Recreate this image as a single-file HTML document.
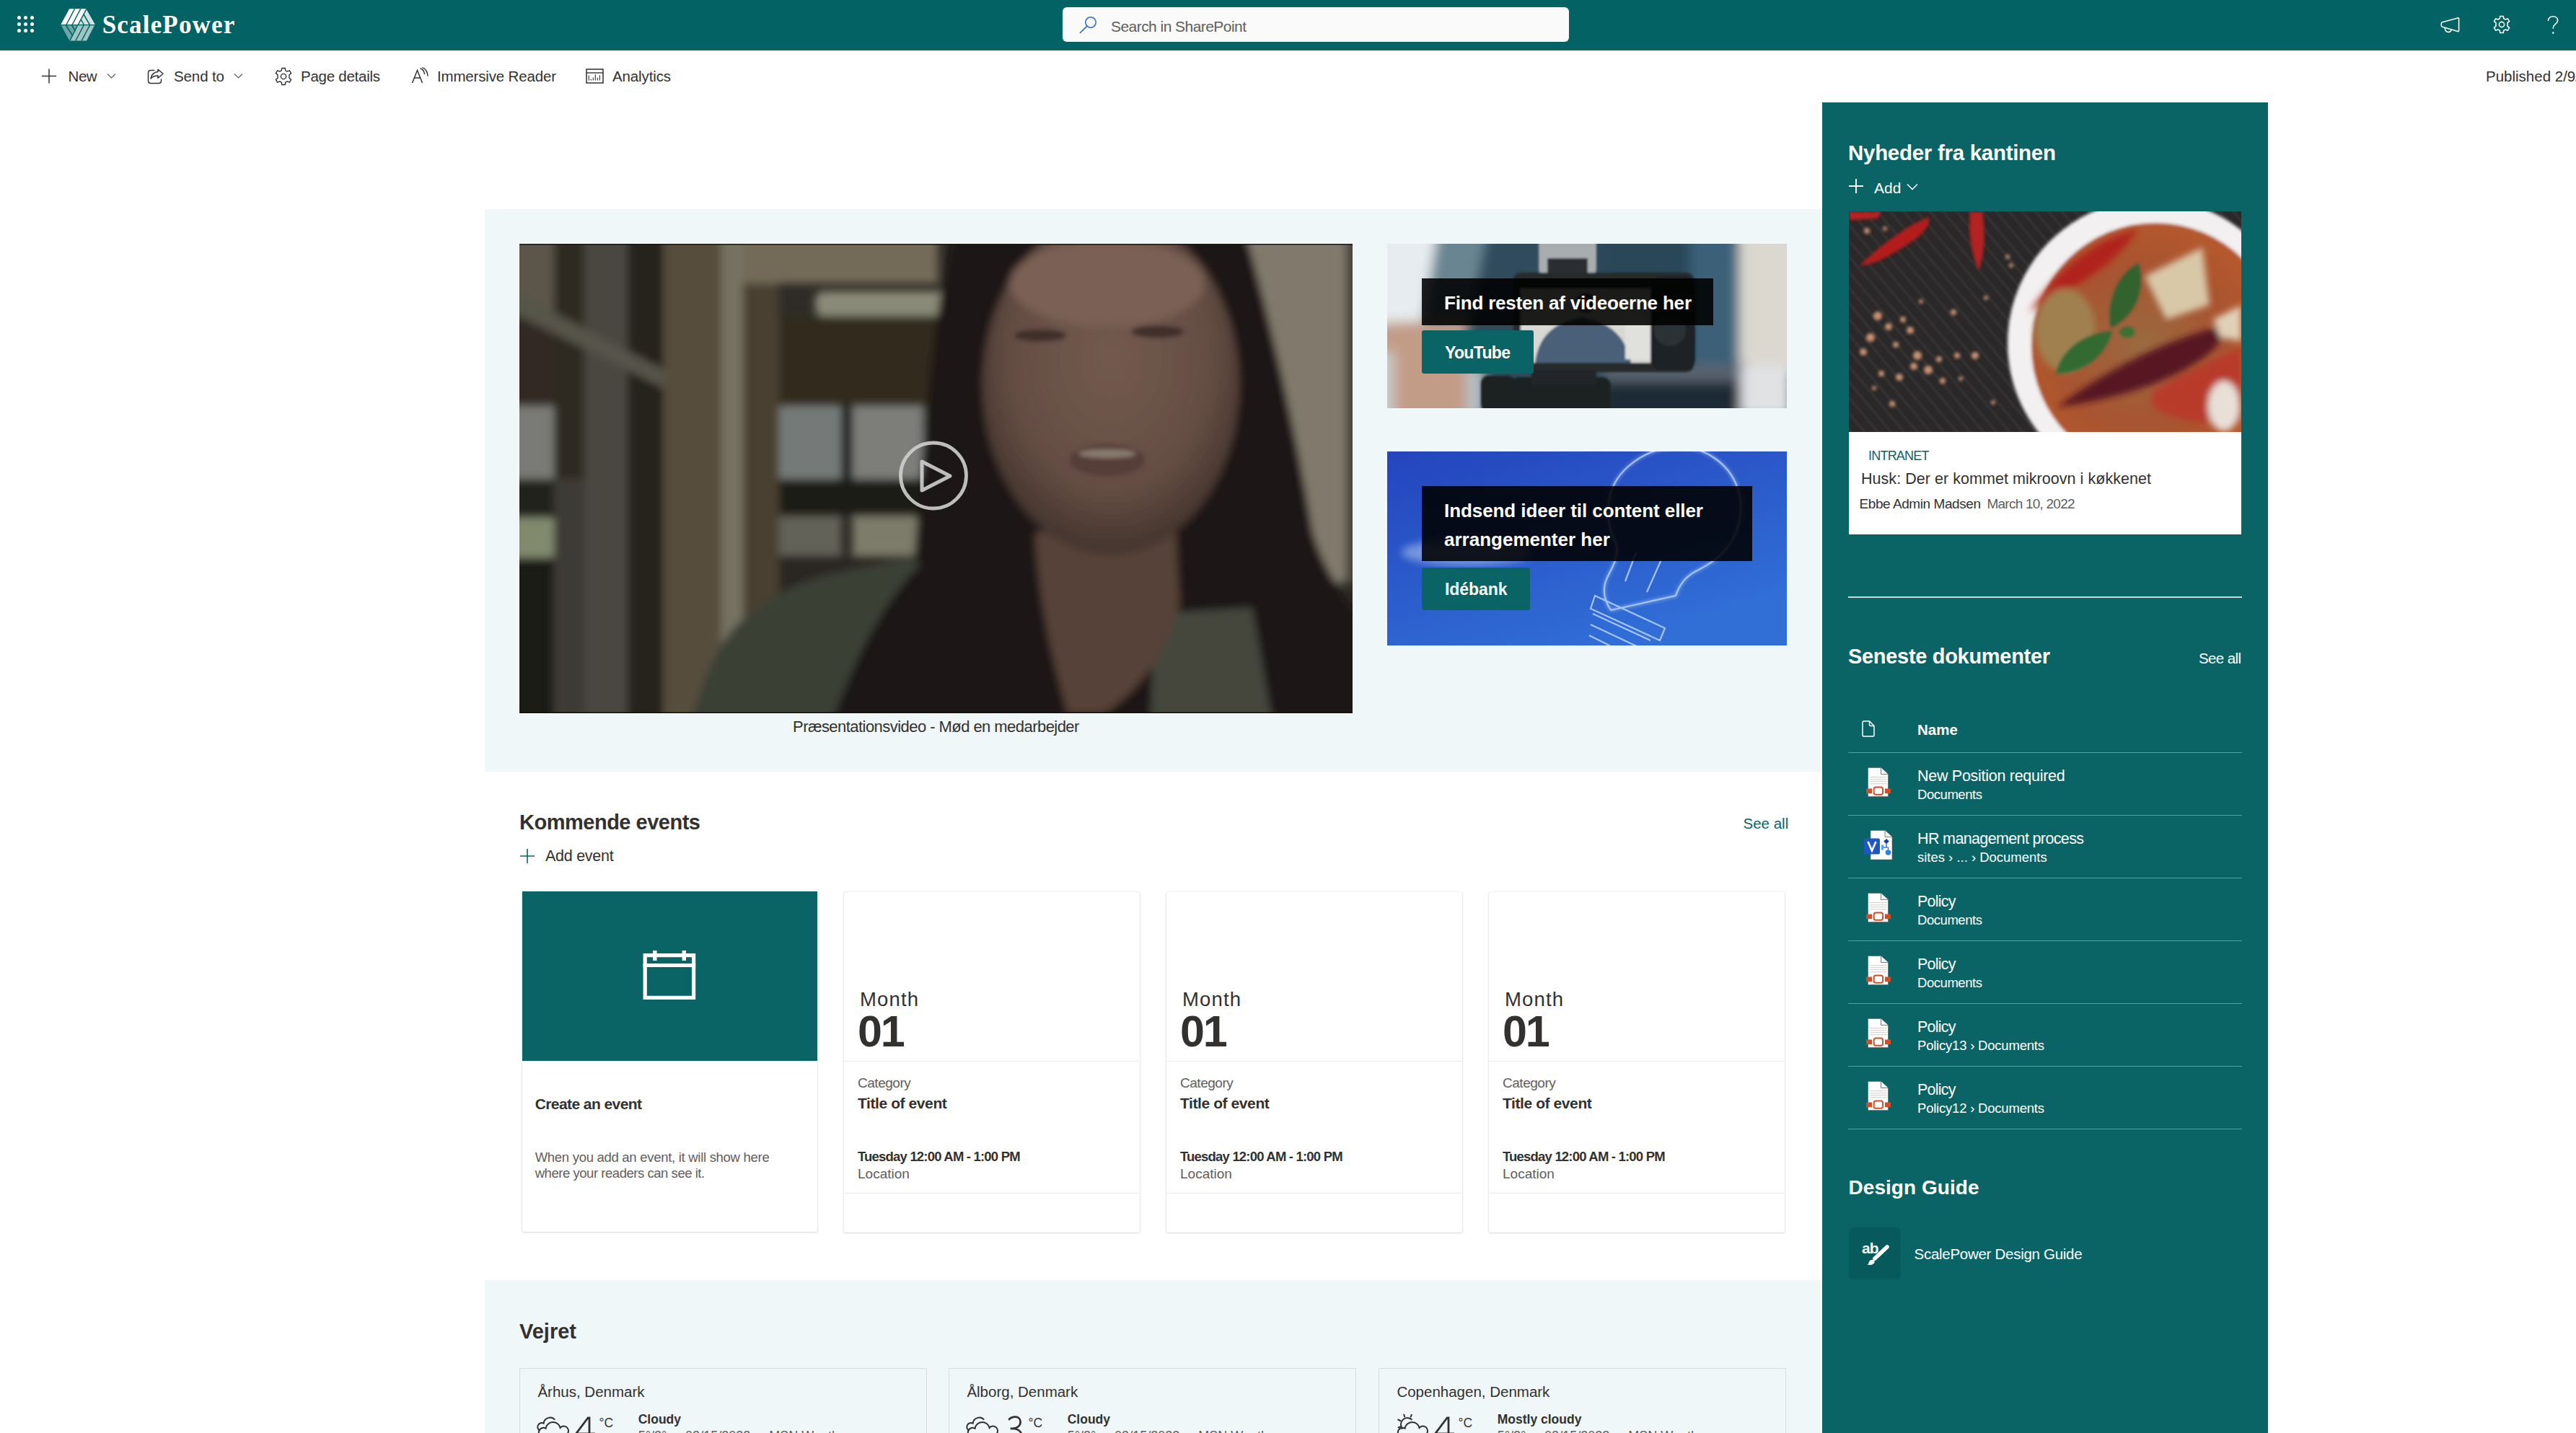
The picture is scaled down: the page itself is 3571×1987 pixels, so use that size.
<!DOCTYPE html>
<html><head><meta charset="utf-8"><style>
html,body{margin:0;padding:0;width:3571px;height:1987px;overflow:hidden;background:#fff;position:relative;font-family:"Liberation Sans", sans-serif;}
.t{position:absolute;line-height:1;white-space:pre;}
.a{position:absolute;}


</style></head><body>
<div class='a' style='left:0;top:0;width:3571px;height:70px;background:#036264'></div><div class='a' style='left:24px;top:22px;width:5px;height:5px;border-radius:50%;background:#fff'></div><div class='a' style='left:33px;top:22px;width:5px;height:5px;border-radius:50%;background:#fff'></div><div class='a' style='left:42px;top:22px;width:5px;height:5px;border-radius:50%;background:#fff'></div><div class='a' style='left:24px;top:31px;width:5px;height:5px;border-radius:50%;background:#fff'></div><div class='a' style='left:33px;top:31px;width:5px;height:5px;border-radius:50%;background:#fff'></div><div class='a' style='left:42px;top:31px;width:5px;height:5px;border-radius:50%;background:#fff'></div><div class='a' style='left:24px;top:40px;width:5px;height:5px;border-radius:50%;background:#fff'></div><div class='a' style='left:33px;top:40px;width:5px;height:5px;border-radius:50%;background:#fff'></div><div class='a' style='left:42px;top:40px;width:5px;height:5px;border-radius:50%;background:#fff'></div><div class='a' style='left:1473px;top:10px;width:702px;height:48px;background:#fafafa;border-radius:6px'></div><div class='a' style='left:2526px;top:142px;width:618px;height:1845px;background:#0a6466'></div><div class='a' style='left:672px;top:290px;width:1853px;height:780px;background:#eff7f9'></div><div class='a' style='left:672px;top:1775px;width:1853px;height:212px;background:#eff7f9'></div><div class='a' style='left:720px;top:1897px;width:565px;height:120px;border:1px solid #dcdcdc;box-sizing:border-box'></div><div class='a' style='left:1315px;top:1897px;width:565px;height:120px;border:1px solid #dcdcdc;box-sizing:border-box'></div><div class='a' style='left:1911px;top:1897px;width:565px;height:120px;border:1px solid #dcdcdc;box-sizing:border-box'></div><div class='a' style='left:724px;top:1236px;width:409px;height:472px;background:#fff;border-radius:2px;box-shadow:0 0 1.5px rgba(0,0,0,.22),0 1px 3px rgba(0,0,0,.12)'></div><div class='a' style='left:724px;top:1236px;width:409px;height:235px;background:#0a6466'></div><div class='a' style='left:1170px;top:1236.5px;width:410px;height:472px;background:#fff;border-radius:2px;box-shadow:0 0 1.5px rgba(0,0,0,.22),0 1px 3px rgba(0,0,0,.12)'></div><div class='a' style='left:1170px;top:1471px;width:410px;height:1px;background:#edebe9'></div><div class='a' style='left:1170px;top:1654px;width:410px;height:1px;background:#edebe9'></div><div class='a' style='left:1617px;top:1236.5px;width:410px;height:472px;background:#fff;border-radius:2px;box-shadow:0 0 1.5px rgba(0,0,0,.22),0 1px 3px rgba(0,0,0,.12)'></div><div class='a' style='left:1617px;top:1471px;width:410px;height:1px;background:#edebe9'></div><div class='a' style='left:1617px;top:1654px;width:410px;height:1px;background:#edebe9'></div><div class='a' style='left:2064px;top:1236.5px;width:410px;height:472px;background:#fff;border-radius:2px;box-shadow:0 0 1.5px rgba(0,0,0,.22),0 1px 3px rgba(0,0,0,.12)'></div><div class='a' style='left:2064px;top:1471px;width:410px;height:1px;background:#edebe9'></div><div class='a' style='left:2064px;top:1654px;width:410px;height:1px;background:#edebe9'></div><div class='a' style='left:2563px;top:599px;width:544px;height:142px;background:#fff'></div><div class='a' style='left:2562px;top:827px;width:546px;height:2px;background:#c8d8d8'></div><div class='a' style='left:2562px;top:1043px;width:546px;height:1px;background:#4aa3a3'></div><div class='a' style='left:2562px;top:1130px;width:546px;height:1px;background:#4aa3a3'></div><div class='a' style='left:2562px;top:1217px;width:546px;height:1px;background:#4aa3a3'></div><div class='a' style='left:2562px;top:1304px;width:546px;height:1px;background:#4aa3a3'></div><div class='a' style='left:2562px;top:1391px;width:546px;height:1px;background:#4aa3a3'></div><div class='a' style='left:2562px;top:1478px;width:546px;height:1px;background:#4aa3a3'></div><div class='a' style='left:2562px;top:1565px;width:546px;height:1px;background:#4aa3a3'></div><div class='a' style='left:719px;top:337px;width:1157px;height:653px;background:#fff'></div><svg class="a" style="left:720px;top:338px" width="1155" height="651" viewBox="0 0 1155 651">
<defs>
<filter id="bv" x="-10%" y="-10%" width="120%" height="120%"><feGaussianBlur stdDeviation="6"/></filter>
<filter id="bv2" x="-10%" y="-10%" width="120%" height="120%"><feGaussianBlur stdDeviation="3"/></filter>
<radialGradient id="face" cx="0.5" cy="0.42" r="0.6">
<stop offset="0" stop-color="#735a4f"/><stop offset="0.65" stop-color="#644d43"/><stop offset="1" stop-color="#3f312b"/>
</radialGradient>
</defs>
<rect width="1155" height="651" fill="#2f2c27"/>
<g filter="url(#bv)">
<rect x="-20" y="-20" width="68" height="120" fill="#5c5548"/>
<rect x="-20" y="100" width="68" height="125" fill="#302c24"/>
<rect x="-20" y="225" width="68" height="101" fill="#7a7a76"/>
<rect x="-20" y="326" width="68" height="54" fill="#22221c"/>
<rect x="-20" y="380" width="68" height="55" fill="#828a6e"/>
<rect x="-20" y="435" width="68" height="240" fill="#1a1a16"/>
<rect x="48" y="-20" width="42" height="346" fill="#2e2a24"/>
<rect x="48" y="326" width="42" height="345" fill="#3c3a34"/>
<rect x="90" y="-20" width="60" height="691" fill="#4a4640"/>
<rect x="150" y="-20" width="50" height="691" fill="#28241e"/>
<path d="M-20 60 L210 180 L210 205 L-20 90Z" fill="#57544a"/>
<rect x="200" y="-20" width="80" height="691" fill="#564d3e"/>
<rect x="280" y="-20" width="30" height="691" fill="#767262"/>
<rect x="310" y="-20" width="270" height="75" fill="#736a58"/>
<rect x="410" y="66" width="180" height="34" rx="12" fill="#8a8a78"/>
<rect x="310" y="55" width="50" height="616" fill="#4a4030"/>
<rect x="360" y="100" width="220" height="125" fill="#30291f"/>
<rect x="360" y="225" width="86" height="101" fill="#747a78"/>
<rect x="446" y="225" width="16" height="101" fill="#1e1e1a"/>
<rect x="462" y="225" width="98" height="101" fill="#7d7e7a"/>
<rect x="360" y="326" width="200" height="52" fill="#1c1d19"/>
<rect x="360" y="378" width="86" height="100" fill="#626258"/>
<rect x="462" y="378" width="92" height="54" fill="#7d7c6a"/>
<rect x="360" y="432" width="200" height="240" fill="#2a2822"/>
<rect x="995" y="-20" width="150" height="490" fill="#817a6c"/>
<rect x="1145" y="-20" width="20" height="490" fill="#4a453c"/>
<!-- hair -->
<path d="M600 -20 L1005 -20 C1040 100 1075 250 1100 400 C1115 450 1140 490 1175 520 L1175 671 L420 671 C450 590 490 520 548 430 C558 300 570 120 600 -20 Z" fill="#1b1816"/>
<!-- shirt -->
<path d="M236 671 C255 590 290 530 317 516 C340 495 380 470 431 458 L544 433 L556 445 C510 490 470 560 430 671 Z" fill="#3b3f36"/>
<path d="M880 513 L1016 505 L1045 671 L875 671 Z" fill="#44473c"/>
<!-- neck / chest -->
<path d="M715 400 L910 400 L915 500 C895 570 860 620 810 651 L760 651 C740 580 720 500 715 400Z" fill="#564238"/>
<!-- face -->
<ellipse cx="820" cy="196" rx="178" ry="235" fill="url(#face)"/>
<ellipse cx="815" cy="55" rx="135" ry="60" fill="#7a6055"/>
</g>
<g filter="url(#bv2)">
<ellipse cx="722" cy="127" rx="36" ry="8" fill="#3f2e29"/>
<ellipse cx="885" cy="122" rx="36" ry="8" fill="#3f2e29"/>
<ellipse cx="815" cy="300" rx="52" ry="22" fill="#553c38"/>
<ellipse cx="815" cy="291" rx="40" ry="6" fill="#8a7c70"/>
</g>
<rect x="0" y="0" width="1155" height="1.5" fill="#1a1612"/><rect x="0" y="649.5" width="1155" height="1.5" fill="#12100c"/>
<!-- play button -->
<circle cx="574" cy="321.5" r="45.5" fill="none" stroke="#cfcfcf" stroke-width="4.8" opacity="0.9"/>
<path d="M558 302 L558 342 L597 322 Z" fill="none" stroke="#cfcfcf" stroke-width="5" stroke-linejoin="round" opacity="0.9"/>
</svg>
<svg class="a" style="left:1923px;top:338px" width="554" height="228" viewBox="0 0 554 228">
<defs>
<filter id="bt1" x="-20%" y="-20%" width="140%" height="140%"><feGaussianBlur stdDeviation="8"/></filter>
<filter id="bt1b" x="-20%" y="-20%" width="140%" height="140%"><feGaussianBlur stdDeviation="1.5"/></filter>
</defs>
<rect width="554" height="228" fill="#2f4b5c"/>
<g filter="url(#bt1)">
<path d="M-20 -20 L80 -20 L50 120 L-20 130Z" fill="#e6ecef"/>
<path d="M70 -20 L140 -20 L115 110 L48 118Z" fill="#6a8592"/>
<path d="M-20 110 L110 105 L125 250 L-20 250Z" fill="#c39c88"/>
<rect x="-20" y="150" width="30" height="100" fill="#c8ccc8"/>
<rect x="110" y="170" width="25" height="70" fill="#b8c0c4"/>
<rect x="290" y="-20" width="140" height="90" rx="30" fill="#2a4658"/>
<rect x="420" y="-20" width="70" height="200" fill="#3a6078"/>
<rect x="488" y="-20" width="80" height="200" fill="#dcd8d0"/>
<rect x="300" y="167" width="200" height="24" fill="#5a6470"/>
<rect x="300" y="191" width="200" height="50" fill="#1e2a34"/>
<rect x="490" y="170" width="70" height="70" fill="#e0e2e4"/>
</g>
<g filter="url(#bt1b)">
<rect x="210" y="-5" width="80" height="45" rx="4" fill="#a9acae"/>
<rect x="222" y="20" width="56" height="25" fill="#2a2d30"/>
<rect x="175" y="40" width="250" height="138" rx="10" fill="#25292c"/>
<rect x="185" y="62" width="180" height="103" fill="#d8d8d4"/>
<path d="M205 165 C210 125 235 108 270 102 C305 108 330 125 338 165Z" fill="#4a6078"/>
<circle cx="275" cy="82" r="14" fill="#6a5446"/>
<rect x="330" y="100" width="35" height="60" fill="#e0e0dc"/>
<rect x="365" y="45" width="62" height="130" rx="14" fill="#1f2326"/>
<circle cx="392" cy="120" r="22" fill="#2c3236"/>
<rect x="130" y="183" width="48" height="50" rx="10" fill="#1e2224"/>
<rect x="170" y="185" width="140" height="50" rx="12" fill="#1c2022"/>
<rect x="200" y="175" width="90" height="20" fill="#24282b"/>
</g>
</svg>
<svg class="a" style="left:1923px;top:626px" width="554" height="269" viewBox="0 0 554 269">
<defs>
<linearGradient id="t2bg" x1="0" y1="0" x2="0.6" y2="1">
<stop offset="0" stop-color="#2444bd"/><stop offset="1" stop-color="#316fd7"/>
</linearGradient>
<filter id="glow" x="-20%" y="-20%" width="140%" height="140%"><feGaussianBlur stdDeviation="2.5"/></filter>
<filter id="bt2" x="-50%" y="-50%" width="200%" height="200%"><feGaussianBlur stdDeviation="6"/></filter>
</defs>
<rect width="554" height="269" fill="url(#t2bg)"/>
<ellipse cx="110" cy="140" rx="90" ry="18" fill="#c8d8f4" opacity="0.5" filter="url(#bt2)"/>
<g fill="none" stroke="#b9d4ff" stroke-width="2.2" opacity="0.85">
<path d="M310 220 C300 205 298 190 305 175 C312 160 320 150 318 130 C300 95 300 50 335 20 C370 -10 420 -15 455 10 C490 35 500 80 480 120 C470 140 450 155 430 165 C415 172 405 185 400 200 Z" filter="url(#glow)"/>
<path d="M310 220 C300 205 298 190 305 175 C312 160 320 150 318 130 C300 95 300 50 335 20 C370 -10 420 -15 455 10 C490 35 500 80 480 120 C470 140 450 155 430 165 C415 172 405 185 400 200 Z"/>
<path d="M288 200 L385 245 L378 262 L282 218 Z"/>
<path d="M285 225 L365 262 M282 240 L350 272 M280 255 L330 280"/>
<path d="M330 180 L345 140 M360 195 L380 150"/>
</g>
</svg>
<svg class="a" style="left:2563px;top:293px" width="544" height="306" viewBox="0 0 544 306">
<defs>
<filter id="bf" x="-20%" y="-20%" width="140%" height="140%"><feGaussianBlur stdDeviation="2"/></filter>
<filter id="bf2" x="-20%" y="-20%" width="140%" height="140%"><feGaussianBlur stdDeviation="5"/></filter>
<pattern id="stripes" width="14" height="14" patternUnits="userSpaceOnUse" patternTransform="rotate(-40)">
<rect width="14" height="14" fill="#2a2828"/><rect width="4" height="14" fill="#323030"/>
</pattern>
<radialGradient id="curry" cx="0.45" cy="0.5" r="0.55">
<stop offset="0" stop-color="#9a6a40"/><stop offset="0.6" stop-color="#a85430"/><stop offset="1" stop-color="#b85a2c"/>
</radialGradient>
</defs>
<rect width="544" height="306" fill="url(#stripes)"/>
<g filter="url(#bf)">
<path d="M15 75 C40 50 80 20 110 8 C115 15 105 30 90 40 C60 60 35 75 15 75Z" fill="#b41e1e"/>
<path d="M0 0 L45 0 L40 10 L0 12Z" fill="#b82222"/>
<path d="M168 0 L185 0 C190 30 188 60 180 82 C170 60 165 30 168 0Z" fill="#b42424"/>
<g fill="#c89070">
<circle cx="25" cy="27" r="4"/><circle cx="50" cy="24" r="3"/><circle cx="220" cy="63" r="3"/><circle cx="225" cy="75" r="3"/>
<circle cx="40" cy="145" r="6"/><circle cx="55" cy="160" r="5"/><circle cx="30" cy="175" r="6"/><circle cx="20" cy="195" r="5"/>
<circle cx="75" cy="150" r="4"/><circle cx="85" cy="165" r="5"/><circle cx="65" cy="185" r="4"/><circle cx="95" cy="200" r="6"/>
<circle cx="90" cy="215" r="5"/><circle cx="110" cy="220" r="6"/><circle cx="70" cy="230" r="5"/><circle cx="45" cy="225" r="4"/>
<circle cx="125" cy="205" r="4"/><circle cx="150" cy="200" r="4"/><circle cx="175" cy="200" r="5"/><circle cx="130" cy="235" r="4"/>
<circle cx="145" cy="140" r="4"/><circle cx="100" cy="125" r="3"/><circle cx="60" cy="267" r="4"/><circle cx="200" cy="265" r="3"/>
<circle cx="155" cy="232" r="3"/><circle cx="35" cy="245" r="3"/><circle cx="190" cy="120" r="3"/>
</g>
<!-- bowl -->
<circle cx="420" cy="183" r="200" fill="#f2f0f0"/>
<circle cx="425" cy="188" r="172" fill="url(#curry)"/>
</g>
<g filter="url(#bf2)">
<path d="M250 140 C290 80 340 40 400 25 C380 60 330 100 280 120Z" fill="#b0241a"/>
<ellipse cx="300" cy="165" rx="42" ry="58" fill="#a08050"/>
<path d="M410 90 L490 50 L500 130 L440 150Z" fill="#d8c8a8"/>
<path d="M288 272 C350 225 440 175 525 158 C515 205 430 250 300 270Z" fill="#571520"/>
<path d="M420 250 C470 220 520 200 544 190 L544 290 C500 300 450 290 420 270Z" fill="#b83a2a"/>
<path d="M505 150 L544 130 L544 180 L515 175Z" fill="#e0d0b8"/>
<ellipse cx="520" cy="270" rx="22" ry="35" fill="#e8e0d8"/>
</g>
<g filter="url(#bf)">
<path d="M287 225 C295 190 330 168 365 166 C355 205 320 225 287 225Z" fill="#336a33"/>
<path d="M363 162 C355 120 378 82 402 72 C412 112 396 145 363 162Z" fill="#32622f"/>
<path d="M375 165 C385 155 400 160 395 172 C385 178 375 175 375 165Z" fill="#3a7036"/>
</g>
</svg>
<!-- logo -->
<svg class="a" style="left:84px;top:12px" width="48" height="45" viewBox="0 0 48 45">
<defs><clipPath id="hex"><path d="M0.3 22 L12.2 0.3 L35.2 0.3 L47.6 22 L36 44.6 L12.6 44.6 Z"/></clipPath></defs>
<g clip-path="url(#hex)">
<rect x="0" y="0" width="48" height="22.2" fill="#ffffff"/>
<path d="M24.2 22.2 L36.1 0.3 L48 0.3 L48 22.2Z" fill="#d2e3e3"/>
<rect x="0" y="23" width="48" height="22" fill="#9fc5c5"/>
<path d="M0 23 L23 23 L12.6 45 L0 45Z" fill="#6ca6a6"/>
<g stroke="#036264" stroke-width="1.5" fill="none">
<path d="M7.8 22.5 L19.7 0 M16 22.5 L27.9 0 M24.2 22.5 L36.1 0"/>
<path d="M32 8 L40.5 22.5 M28.2 15 L32.5 22.5"/>
<path d="M0 22.6 L48 22.6" stroke-width="1.1"/>
<path d="M32.2 23 L20.5 45 M40.5 23 L28.8 45 M23.5 23 L12.6 45"/>
<path d="M7.5 23 L16.5 37 M15.5 23 L20.5 31"/>
</g>
</g>
</svg>
<!-- search icon -->
<svg class="a" style="left:1496px;top:21px" width="26" height="26" viewBox="0 0 26 26">
<circle cx="16" cy="10" r="7.2" fill="none" stroke="#2f6fd0" stroke-width="1.6"/>
<path d="M10.8 15.2 L1.5 24.5" stroke="#2f6fd0" stroke-width="1.7" stroke-linecap="round"/>
</svg>
<!-- megaphone -->
<svg class="a" style="left:3382px;top:23.5px" width="28" height="25" viewBox="0 0 28 25">
<path d="M3 7 C2 7.5 2 12.5 3 13 L25 19.5 C26 19.8 26.6 19.3 26.6 18.5 L26.6 1.8 C26.6 1 26 0.6 25 0.9 Z" fill="none" stroke="#fff" stroke-width="1.6" stroke-linejoin="round"/>
<path d="M7.5 14.5 C7 18 9 20.5 12 20.5 C14 20.5 15.5 19.5 16 17.5" fill="none" stroke="#fff" stroke-width="1.6"/>
</svg>
<!-- gear header -->
<svg class="a" style="left:3455px;top:21px" width="26" height="26" viewBox="-13 -13 26 26">
<path id="gearp" d="M-2.2 -11.5 L2.2 -11.5 L2.8 -8.2 L5.3 -6.9 L8.4 -8.2 L10.6 -4.4 L8 -2.3 L8 2.3 L10.6 4.4 L8.4 8.2 L5.3 6.9 L2.8 8.2 L2.2 11.5 L-2.2 11.5 L-2.8 8.2 L-5.3 6.9 L-8.4 8.2 L-10.6 4.4 L-8 2.3 L-8 -2.3 L-10.6 -4.4 L-8.4 -8.2 L-5.3 -6.9 L-2.8 -8.2 Z" fill="none" stroke="#fff" stroke-width="1.6" stroke-linejoin="round"/>
<circle cx="0" cy="0" r="3.6" fill="none" stroke="#fff" stroke-width="1.6"/>
</svg>
<!-- help -->
<svg class="a" style="left:3530px;top:22px" width="20" height="26" viewBox="0 0 20 26">
<path d="M2.5 6.5 C2.5 3 5.5 0.8 9.2 0.8 C13 0.8 15.6 3.2 15.6 6.3 C15.6 9 14 10.2 12 11.8 C10.2 13.2 9.3 14.3 9.3 17.2" fill="none" stroke="#fff" stroke-width="1.6" stroke-linecap="round"/>
<circle cx="9.3" cy="23.6" r="1.3" fill="#fff"/>
</svg>
<!-- command bar icons -->
<svg class="a" style="left:57px;top:95px" width="22" height="21" viewBox="0 0 22 21">
<path d="M11 0.5 V20.5 M1 10.5 H21" stroke="#323130" stroke-width="1.5"/>
</svg>
<svg class="a" style="left:148px;top:101px" width="13" height="9" viewBox="0 0 13 9"><path d="M1 1.5 L6.5 7 L12 1.5" fill="none" stroke="#605e5c" stroke-width="1.2"/></svg>
<svg class="a" style="left:204px;top:95px" width="24" height="22" viewBox="0 0 24 22">
<path d="M9.5 2.5 H5 C3 2.5 1.5 4 1.5 6 V17 C1.5 19 3 20.5 5 20.5 H16 C18 20.5 19.5 19 19.5 17 V15" fill="none" stroke="#323130" stroke-width="1.5" stroke-linecap="round"/>
<path d="M15 1.2 L22 7.2 L15 13.2 V10 C10 10 7 11.5 5 14 C6 8.5 9.5 5.2 15 4.6 Z" fill="none" stroke="#323130" stroke-width="1.5" stroke-linejoin="round"/>
</svg>
<svg class="a" style="left:324px;top:101px" width="13" height="9" viewBox="0 0 13 9"><path d="M1 1.5 L6.5 7 L12 1.5" fill="none" stroke="#605e5c" stroke-width="1.2"/></svg>
<svg class="a" style="left:379.5px;top:93px" width="26" height="26" viewBox="-13 -13 26 26">
<path d="M-2.2 -11.5 L2.2 -11.5 L2.8 -8.2 L5.3 -6.9 L8.4 -8.2 L10.6 -4.4 L8 -2.3 L8 2.3 L10.6 4.4 L8.4 8.2 L5.3 6.9 L2.8 8.2 L2.2 11.5 L-2.2 11.5 L-2.8 8.2 L-5.3 6.9 L-8.4 8.2 L-10.6 4.4 L-8 2.3 L-8 -2.3 L-10.6 -4.4 L-8.4 -8.2 L-5.3 -6.9 L-2.8 -8.2 Z" fill="none" stroke="#323130" stroke-width="1.4" stroke-linejoin="round"/>
<circle cx="0" cy="0" r="3.6" fill="none" stroke="#323130" stroke-width="1.4"/>
</svg>
<svg class="a" style="left:570px;top:93px" width="26" height="24" viewBox="0 0 26 24">
<path d="M1.5 22 L8.5 4.5 L15.5 22 M4.3 15 H12.7" fill="none" stroke="#323130" stroke-width="1.5"/>
<path d="M13 2 C16 3 18 6 18.5 9.5 M16 0.8 C20 2.5 22.5 6.5 23 12" fill="none" stroke="#323130" stroke-width="1.4" stroke-linecap="round"/>
</svg>
<svg class="a" style="left:812px;top:95px" width="25" height="21" viewBox="0 0 25 21">
<rect x="1" y="1" width="23" height="19" fill="none" stroke="#323130" stroke-width="1.5"/>
<path d="M1 6 H24" stroke="#323130" stroke-width="1.4"/>
<path d="M4.3 9.6 V16.6 M7.3 14.5 V16.6 M10.3 12.5 V16.6 M13.3 8.2 V16.6 M16.3 12.8 V16.6 M19.4 9.3 V16.6" stroke="#323130" stroke-width="1.1"/>
</svg>
<!-- sidebar add -->
<svg class="a" style="left:2562px;top:247px" width="22" height="22" viewBox="0 0 22 22"><path d="M11 1 V21 M1 11 H21" stroke="#fff" stroke-width="1.8"/></svg>
<svg class="a" style="left:2643px;top:254px" width="16" height="10" viewBox="0 0 16 10"><path d="M1 1.5 L8 8.5 L15 1.5" fill="none" stroke="#fff" stroke-width="1.5"/></svg>
<!-- file header icon -->
<svg class="a" style="left:2580px;top:999px" width="20" height="23" viewBox="0 0 20 23">
<path d="M2 2.5 C2 1.6 2.6 1 3.5 1 H11.5 L18 7.5 V20.5 C18 21.4 17.4 22 16.5 22 H3.5 C2.6 22 2 21.4 2 20.5 Z M11.5 1 V6 C11.5 7 12 7.5 13 7.5 H18" fill="none" stroke="#fff" stroke-width="1.5" stroke-linejoin="round"/>
</svg>
<!-- design guide icon -->
<div class="a" style="left:2563px;top:1702px;width:72px;height:72px;background:#065a5c;border-radius:6px"></div>
<svg class="a" style="left:2563px;top:1702px" width="72" height="72" viewBox="0 0 72 72">
<text x="18" y="35.5" font-family="Liberation Sans" font-weight="700" font-size="21" fill="#fff" letter-spacing="-1">ab</text>
<path d="M53 27 L36 43" stroke="#fff" stroke-width="5.5" stroke-linecap="round"/>
<path d="M34.5 45 C31 44 28 46 27.5 49 C27.3 50.5 26.5 51 25.5 51.5 C29 52.5 33 52 35 49.5 C36 48 35.8 46 34.5 45Z" fill="#fff"/>
</svg>
<!-- events add plus -->
<svg class="a" style="left:720px;top:1176px" width="22" height="22" viewBox="0 0 22 22"><path d="M11 1 V21 M1 11 H21" stroke="#0a6466" stroke-width="1.6"/></svg>
<!-- calendar -->
<svg class="a" style="left:888px;top:1315px" width="80" height="75" viewBox="888 1315 80 75">
<rect x="894.2" y="1324.6" width="67.4" height="58.8" fill="none" stroke="#fff" stroke-width="5.2"/>
<path d="M891.6 1338.5 H964.2" stroke="#fff" stroke-width="5.2"/>
<rect x="905.1" y="1318" width="5.4" height="14" fill="#fff"/>
<rect x="945.6" y="1318" width="5.4" height="14" fill="#fff"/>
</svg>
<svg class="a" style="left:2587px;top:1064px" width="36" height="42" viewBox="0 0 36 42">
<path d="M2.5 0.5 H20.5 L30.5 9.5 V40.5 H2.5 Z" fill="#fff" stroke="#605e5c" stroke-width="0.6"/>
<path d="M20.5 0.5 V9.5 H30.5" fill="#f3f2f1" stroke="#605e5c" stroke-width="0.8"/>
<path d="M5.5 13.7 H28.5 M5.5 16.8 H28.5 M5.5 19.7 H28.5 M5.5 22.8 H28.5" stroke="#c8c6c4" stroke-width="0.9"/>
<rect x="0" y="29.5" width="8" height="6.7" fill="#d24d26"/>
<rect x="26" y="29.5" width="8" height="6.7" fill="#d24d26"/>
<rect x="10.7" y="27.5" width="12.3" height="10.3" rx="2.6" fill="#fff" stroke="#d24d26" stroke-width="1.9"/>
</svg><svg class="a" style="left:2584px;top:1151px" width="40" height="42" viewBox="0 0 40 42">
<path d="M9 0.5 H29 L39 9.5 V41 H9 Z" fill="#fff" stroke="#605e5c" stroke-width="0.6"/>
<path d="M29 0.5 V9.5 H39" fill="#f3f2f1" stroke="#605e5c" stroke-width="0.8"/>
<rect x="0" y="11.5" width="22" height="22" rx="2" fill="#1e56c2"/>
<path d="M5.5 16 L11 28.5 L16.5 16" fill="none" stroke="#fff" stroke-width="2.6"/>
<path d="M31 12 L34.8 15.6 L31 19.2 L27.2 15.6Z" fill="#1a3f9a"/>
<path d="M31 19 V24 H33.5 V27" stroke="#1e56c2" stroke-width="1.2" fill="none"/>
<rect x="24" y="20.5" width="3" height="7" fill="#58a9f2"/>
<path d="M27 24 H31" stroke="#1e56c2" stroke-width="1.2"/>
<circle cx="33.5" cy="31" r="3.8" fill="#2e7fd8"/>
</svg><svg class="a" style="left:2587px;top:1238px" width="36" height="42" viewBox="0 0 36 42">
<path d="M2.5 0.5 H20.5 L30.5 9.5 V40.5 H2.5 Z" fill="#fff" stroke="#605e5c" stroke-width="0.6"/>
<path d="M20.5 0.5 V9.5 H30.5" fill="#f3f2f1" stroke="#605e5c" stroke-width="0.8"/>
<path d="M5.5 13.7 H28.5 M5.5 16.8 H28.5 M5.5 19.7 H28.5 M5.5 22.8 H28.5" stroke="#c8c6c4" stroke-width="0.9"/>
<rect x="0" y="29.5" width="8" height="6.7" fill="#d24d26"/>
<rect x="26" y="29.5" width="8" height="6.7" fill="#d24d26"/>
<rect x="10.7" y="27.5" width="12.3" height="10.3" rx="2.6" fill="#fff" stroke="#d24d26" stroke-width="1.9"/>
</svg><svg class="a" style="left:2587px;top:1325px" width="36" height="42" viewBox="0 0 36 42">
<path d="M2.5 0.5 H20.5 L30.5 9.5 V40.5 H2.5 Z" fill="#fff" stroke="#605e5c" stroke-width="0.6"/>
<path d="M20.5 0.5 V9.5 H30.5" fill="#f3f2f1" stroke="#605e5c" stroke-width="0.8"/>
<path d="M5.5 13.7 H28.5 M5.5 16.8 H28.5 M5.5 19.7 H28.5 M5.5 22.8 H28.5" stroke="#c8c6c4" stroke-width="0.9"/>
<rect x="0" y="29.5" width="8" height="6.7" fill="#d24d26"/>
<rect x="26" y="29.5" width="8" height="6.7" fill="#d24d26"/>
<rect x="10.7" y="27.5" width="12.3" height="10.3" rx="2.6" fill="#fff" stroke="#d24d26" stroke-width="1.9"/>
</svg><svg class="a" style="left:2587px;top:1412px" width="36" height="42" viewBox="0 0 36 42">
<path d="M2.5 0.5 H20.5 L30.5 9.5 V40.5 H2.5 Z" fill="#fff" stroke="#605e5c" stroke-width="0.6"/>
<path d="M20.5 0.5 V9.5 H30.5" fill="#f3f2f1" stroke="#605e5c" stroke-width="0.8"/>
<path d="M5.5 13.7 H28.5 M5.5 16.8 H28.5 M5.5 19.7 H28.5 M5.5 22.8 H28.5" stroke="#c8c6c4" stroke-width="0.9"/>
<rect x="0" y="29.5" width="8" height="6.7" fill="#d24d26"/>
<rect x="26" y="29.5" width="8" height="6.7" fill="#d24d26"/>
<rect x="10.7" y="27.5" width="12.3" height="10.3" rx="2.6" fill="#fff" stroke="#d24d26" stroke-width="1.9"/>
</svg><svg class="a" style="left:2587px;top:1499px" width="36" height="42" viewBox="0 0 36 42">
<path d="M2.5 0.5 H20.5 L30.5 9.5 V40.5 H2.5 Z" fill="#fff" stroke="#605e5c" stroke-width="0.6"/>
<path d="M20.5 0.5 V9.5 H30.5" fill="#f3f2f1" stroke="#605e5c" stroke-width="0.8"/>
<path d="M5.5 13.7 H28.5 M5.5 16.8 H28.5 M5.5 19.7 H28.5 M5.5 22.8 H28.5" stroke="#c8c6c4" stroke-width="0.9"/>
<rect x="0" y="29.5" width="8" height="6.7" fill="#d24d26"/>
<rect x="26" y="29.5" width="8" height="6.7" fill="#d24d26"/>
<rect x="10.7" y="27.5" width="12.3" height="10.3" rx="2.6" fill="#fff" stroke="#d24d26" stroke-width="1.9"/>
</svg><svg class="a" style="left:744px;top:1960px" width="46" height="30" viewBox="0 0 46 30"><path d="M4.5 23.8 A5.6 5.6 0 0 1 9.6 13.6 A9 9 0 0 1 25.2 8.6" fill="none" stroke="#323130" stroke-width="2"/>
<path d="M6.2 32 A6 6 0 0 1 12.6 20.6 A10.2 10.2 0 0 1 32.6 19.8 A6 6 0 0 1 42.6 28" fill="none" stroke="#323130" stroke-width="2"/></svg><div class='t' style='left:830.5px;top:1964.5px;font-size:17.5px;color:#323130'>°C</div><div class='t' style='left:884.7px;top:1982px;font-size:18px;color:#605e5c'>5°/2°  ·  02/15/2022  ·  MSN Weather</div><svg class="a" style="left:1339px;top:1960px" width="46" height="30" viewBox="0 0 46 30"><path d="M4.5 23.8 A5.6 5.6 0 0 1 9.6 13.6 A9 9 0 0 1 25.2 8.6" fill="none" stroke="#323130" stroke-width="2"/>
<path d="M6.2 32 A6 6 0 0 1 12.6 20.6 A10.2 10.2 0 0 1 32.6 19.8 A6 6 0 0 1 42.6 28" fill="none" stroke="#323130" stroke-width="2"/></svg><div class='t' style='left:1425.5px;top:1964.5px;font-size:17.5px;color:#323130'>°C</div><div class='t' style='left:1479.7px;top:1982px;font-size:18px;color:#605e5c'>5°/2°  ·  02/15/2022  ·  MSN Weather</div><svg class="a" style="left:1935px;top:1960px" width="46" height="30" viewBox="0 0 46 30"><path d="M9.5 21.5 A8.2 8.2 0 0 1 22.5 8.8" fill="none" stroke="#323130" stroke-width="2"/>
<path d="M3.2 8.5 L6.2 10 M3.5 19.5 L6.5 18.3 M11.2 1.5 L12.2 4.3 M21.8 1.8 L20.6 4.5" stroke="#323130" stroke-width="2" stroke-linecap="round"/>
<path d="M6.2 32 A6 6 0 0 1 12.6 20.6 A10.2 10.2 0 0 1 32.6 19.8 A6 6 0 0 1 42.6 28" fill="none" stroke="#323130" stroke-width="2"/></svg><div class='t' style='left:2021.5px;top:1964.5px;font-size:17.5px;color:#323130'>°C</div><div class='t' style='left:2075.7px;top:1982px;font-size:18px;color:#605e5c'>5°/2°  ·  02/15/2022  ·  MSN Weather</div><div class='a' style='left:1971px;top:386px;width:404px;height:65px;background:rgba(0,0,0,0.88)'></div><div class='a' style='left:1971px;top:458px;width:155px;height:60px;background:#0a6466;border-radius:3px'></div><div class='a' style='left:1971px;top:674px;width:458px;height:104px;background:rgba(0,0,0,0.88)'></div><div class='a' style='left:1971px;top:787px;width:150px;height:59px;background:#0a6466;border-radius:3px'></div><svg class="a" style="left:790px;top:1955px" width="40" height="40" viewBox="790 1955 40 40"><path d="M817 1964.5 L817 1995 M815.8 1965 L798.5 1988 L825 1988" fill="none" stroke="#323130" stroke-width="2.8" stroke-linejoin="miter"/></svg><svg class="a" style="left:1390px;top:1955px" width="40" height="40" viewBox="1390 1955 40 40"><path d="M1398.3 1968.8 C1400.5 1966 1404 1964.7 1407.3 1964.7 C1412 1964.7 1414.6 1967.6 1414.6 1971.6 C1414.6 1977.2 1410 1980.6 1403.2 1980.8 L1400.6 1980.8 M1403 1980.8 C1411 1980.9 1416.2 1984.6 1416.2 1991" fill="none" stroke="#323130" stroke-width="2.7"/></svg><svg class="a" style="left:1981px;top:1955px" width="40" height="40" viewBox="790 1955 40 40"><path d="M817 1964.5 L817 1995 M815.8 1965 L798.5 1988 L825 1988" fill="none" stroke="#323130" stroke-width="2.8" stroke-linejoin="miter"/></svg>
<div class='t' style='left:94.6px;top:95.6px;font-size:20.5px;font-weight:400;color:#323130;letter-spacing:-0.506px;'>New</div><div class='t' style='left:241.0px;top:95.6px;font-size:20.5px;font-weight:400;color:#323130;letter-spacing:-0.112px;'>Send to</div><div class='t' style='left:417.0px;top:95.6px;font-size:20.5px;font-weight:400;color:#323130;letter-spacing:-0.257px;'>Page details</div><div class='t' style='left:606.0px;top:95.6px;font-size:20.5px;font-weight:400;color:#323130;letter-spacing:-0.164px;'>Immersive Reader</div><div class='t' style='left:849.0px;top:95.6px;font-size:20.5px;font-weight:400;color:#323130;letter-spacing:-0.129px;'>Analytics</div><div class='t' style='left:3446.0px;top:95.6px;font-size:20.5px;font-weight:400;color:#323130;'>Published 2/9/2022</div><div class='t' style='left:1540.0px;top:25.7px;font-size:21px;font-weight:400;color:#605e5c;letter-spacing:-0.550px;'>Search in SharePoint</div><div class='t' style='left:141.7px;top:17.0px;font-size:35px;font-weight:700;color:#fff;letter-spacing:1.179px;font-family:Liberation Serif;'>ScalePower</div><div class='t' style='left:2562.0px;top:197.0px;font-size:29.5px;font-weight:700;color:#fff;letter-spacing:-0.287px;'>Nyheder fra kantinen</div><div class='t' style='left:2598.0px;top:249.8px;font-size:21px;font-weight:400;color:#fff;letter-spacing:0.067px;'>Add</div><div class='t' style='left:2590.0px;top:623.3px;font-size:18px;font-weight:400;color:#0a6466;letter-spacing:-0.786px;'>INTRANET</div><div class='t' style='left:2580.0px;top:653.8px;font-size:21.5px;font-weight:400;color:#323130;letter-spacing:0.046px;'>Husk: Der er kommet mikroovn i køkkenet</div><div class='t' style='left:2577.5px;top:688.6px;font-size:19px;font-weight:400;color:#323130;letter-spacing:-0.427px;'>Ebbe Admin Madsen</div><div class='t' style='left:2754.5px;top:688.6px;font-size:19px;font-weight:400;color:#605e5c;letter-spacing:-0.771px;'>March 10, 2022</div><div class='t' style='left:2562.0px;top:895.5px;font-size:29px;font-weight:700;color:#fff;letter-spacing:-0.309px;'>Seneste dokumenter</div><div class='t' style='left:3048.0px;top:902.6px;font-size:20.5px;font-weight:400;color:#fff;letter-spacing:-0.614px;'>See all</div><div class='t' style='left:2658.0px;top:1001.6px;font-size:20.5px;font-weight:700;color:#fff;letter-spacing:0.054px;'>Name</div><div class='t' style='left:2658.0px;top:1065.8px;font-size:21.5px;font-weight:400;color:#fff;letter-spacing:-0.282px;'>New Position required</div><div class='t' style='left:2658.0px;top:1093.3px;font-size:18.5px;font-weight:400;color:#fff;letter-spacing:-0.446px;'>Documents</div><div class='t' style='left:2658.0px;top:1152.8px;font-size:21.5px;font-weight:400;color:#fff;letter-spacing:-0.639px;'>HR management process</div><div class='t' style='left:2658.0px;top:1180.3px;font-size:18.5px;font-weight:400;color:#fff;letter-spacing:-0.009px;'>sites › ... › Documents</div><div class='t' style='left:2658.0px;top:1239.8px;font-size:21.5px;font-weight:400;color:#fff;letter-spacing:-0.790px;'>Policy</div><div class='t' style='left:2658.0px;top:1267.3px;font-size:18.5px;font-weight:400;color:#fff;letter-spacing:-0.446px;'>Documents</div><div class='t' style='left:2658.0px;top:1326.8px;font-size:21.5px;font-weight:400;color:#fff;letter-spacing:-0.790px;'>Policy</div><div class='t' style='left:2658.0px;top:1354.3px;font-size:18.5px;font-weight:400;color:#fff;letter-spacing:-0.446px;'>Documents</div><div class='t' style='left:2658.0px;top:1413.8px;font-size:21.5px;font-weight:400;color:#fff;letter-spacing:-0.790px;'>Policy</div><div class='t' style='left:2658.0px;top:1441.3px;font-size:18.5px;font-weight:400;color:#fff;letter-spacing:-0.207px;'>Policy13 › Documents</div><div class='t' style='left:2658.0px;top:1500.8px;font-size:21.5px;font-weight:400;color:#fff;letter-spacing:-0.790px;'>Policy</div><div class='t' style='left:2658.0px;top:1528.3px;font-size:18.5px;font-weight:400;color:#fff;letter-spacing:-0.207px;'>Policy12 › Documents</div><div class='t' style='left:2562.5px;top:1633.3px;font-size:28px;font-weight:700;color:#fff;letter-spacing:0.048px;'>Design Guide</div><div class='t' style='left:2653.6px;top:1728.9px;font-size:20.5px;font-weight:400;color:#fff;letter-spacing:-0.286px;'>ScalePower Design Guide</div><div class='t' style='left:2002.0px;top:407.0px;font-size:26px;font-weight:700;color:#fff;letter-spacing:-0.193px;'>Find resten af videoerne her</div><div class='t' style='left:2003.0px;top:477.5px;font-size:23px;font-weight:700;color:#fff;letter-spacing:-0.661px;'>YouTube</div><div class='t' style='left:2002.0px;top:695.4px;font-size:26px;font-weight:700;color:#fff;letter-spacing:-0.073px;'>Indsend ideer til content eller</div><div class='t' style='left:2002.0px;top:735.4px;font-size:26px;font-weight:700;color:#fff;'>arrangementer her</div><div class='t' style='left:2003.0px;top:806.3px;font-size:23px;font-weight:700;color:#fff;letter-spacing:-0.069px;'>Idébank</div><div class='t' style='left:1099.0px;top:997.4px;font-size:22px;font-weight:400;color:#323130;letter-spacing:-0.548px;'>Præsentationsvideo - Mød en medarbejder</div><div class='t' style='left:720.0px;top:1125.5px;font-size:29px;font-weight:700;color:#323130;letter-spacing:-0.490px;'>Kommende events</div><div class='t' style='left:756.0px;top:1176.8px;font-size:21.5px;font-weight:400;color:#323130;letter-spacing:-0.265px;'>Add event</div><div class='t' style='left:2416.5px;top:1131.6px;font-size:20.5px;font-weight:400;color:#0a6466;'>See all</div><div class='t' style='left:741.7px;top:1519.9px;font-size:21px;font-weight:700;color:#323130;letter-spacing:-0.579px;'>Create an event</div><div class='t' style='left:741.7px;top:1595.7px;font-size:18.5px;font-weight:400;color:#605e5c;letter-spacing:-0.289px;'>When you add an event, it will show here</div><div class='t' style='left:741.7px;top:1618.0px;font-size:18.5px;font-weight:400;color:#605e5c;letter-spacing:-0.460px;'>where your readers can see it.</div><div class='t' style='left:1192.0px;top:1371.5px;font-size:27.5px;font-weight:400;color:#323130;letter-spacing:1.142px;'>Month</div><div class='t' style='left:1189.0px;top:1399.9px;font-size:61px;font-weight:700;color:#323130;letter-spacing:-2.153px;'>01</div><div class='t' style='left:1189.0px;top:1491.7px;font-size:19px;font-weight:400;color:#605e5c;letter-spacing:-0.471px;'>Category</div><div class='t' style='left:1189.0px;top:1518.5px;font-size:21px;font-weight:700;color:#323130;letter-spacing:-0.411px;'>Title of event</div><div class='t' style='left:1189.0px;top:1594.8px;font-size:18.5px;font-weight:700;color:#323130;letter-spacing:-0.805px;'>Tuesday 12:00 AM - 1:00 PM</div><div class='t' style='left:1189.0px;top:1617.6px;font-size:19px;font-weight:400;color:#605e5c;'>Location</div><div class='t' style='left:1639.0px;top:1371.5px;font-size:27.5px;font-weight:400;color:#323130;letter-spacing:1.142px;'>Month</div><div class='t' style='left:1636.0px;top:1399.9px;font-size:61px;font-weight:700;color:#323130;letter-spacing:-2.153px;'>01</div><div class='t' style='left:1636.0px;top:1491.7px;font-size:19px;font-weight:400;color:#605e5c;letter-spacing:-0.471px;'>Category</div><div class='t' style='left:1636.0px;top:1518.5px;font-size:21px;font-weight:700;color:#323130;letter-spacing:-0.411px;'>Title of event</div><div class='t' style='left:1636.0px;top:1594.8px;font-size:18.5px;font-weight:700;color:#323130;letter-spacing:-0.805px;'>Tuesday 12:00 AM - 1:00 PM</div><div class='t' style='left:1636.0px;top:1617.6px;font-size:19px;font-weight:400;color:#605e5c;'>Location</div><div class='t' style='left:2086.0px;top:1371.5px;font-size:27.5px;font-weight:400;color:#323130;letter-spacing:1.142px;'>Month</div><div class='t' style='left:2083.0px;top:1399.9px;font-size:61px;font-weight:700;color:#323130;letter-spacing:-2.153px;'>01</div><div class='t' style='left:2083.0px;top:1491.7px;font-size:19px;font-weight:400;color:#605e5c;letter-spacing:-0.471px;'>Category</div><div class='t' style='left:2083.0px;top:1518.5px;font-size:21px;font-weight:700;color:#323130;letter-spacing:-0.411px;'>Title of event</div><div class='t' style='left:2083.0px;top:1594.8px;font-size:18.5px;font-weight:700;color:#323130;letter-spacing:-0.805px;'>Tuesday 12:00 AM - 1:00 PM</div><div class='t' style='left:2083.0px;top:1617.6px;font-size:19px;font-weight:400;color:#605e5c;'>Location</div><div class='t' style='left:720.0px;top:1831.5px;font-size:29px;font-weight:700;color:#323130;'>Vejret</div><div class='t' style='left:745.4px;top:1919.6px;font-size:20.5px;font-weight:400;color:#323130;'>Århus, Denmark</div><div class='t' style='left:884.7px;top:1960.2px;font-size:17.5px;font-weight:700;color:#323130;'>Cloudy</div><div class='t' style='left:1340.4px;top:1919.6px;font-size:20.5px;font-weight:400;color:#323130;'>Ålborg, Denmark</div><div class='t' style='left:1479.7px;top:1960.2px;font-size:17.5px;font-weight:700;color:#323130;'>Cloudy</div><div class='t' style='left:1936.4px;top:1919.6px;font-size:20.5px;font-weight:400;color:#323130;'>Copenhagen, Denmark</div><div class='t' style='left:2075.7px;top:1960.2px;font-size:17.5px;font-weight:700;color:#323130;'>Mostly cloudy</div>
</body></html>
